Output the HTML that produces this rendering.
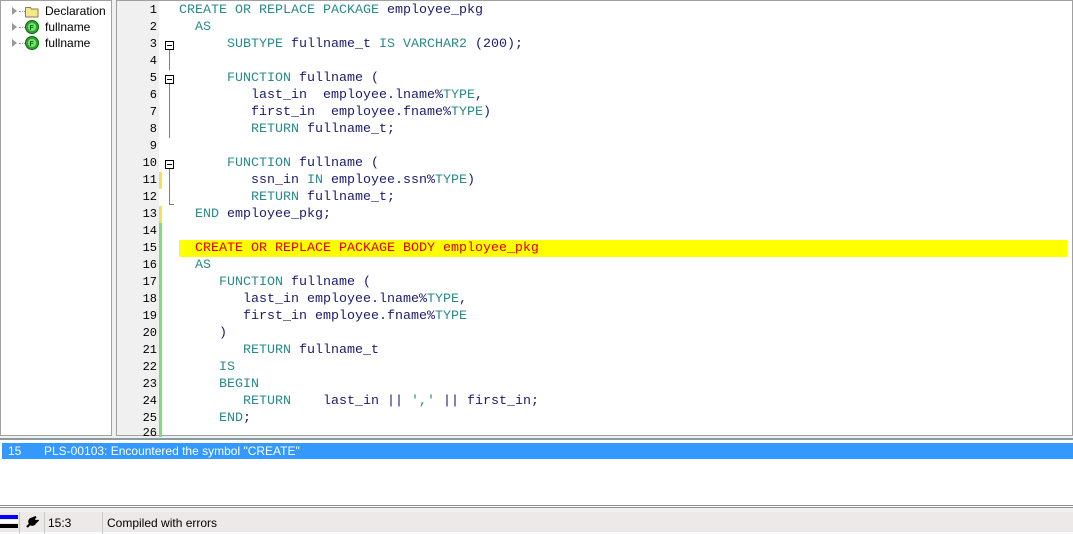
<!DOCTYPE html>
<html><head><meta charset="utf-8"><style>
*{margin:0;padding:0;box-sizing:border-box}
body{width:1073px;height:534px;background:#f0f0f0;position:relative;overflow:hidden;font-family:"Liberation Sans",sans-serif;font-size:12px}
#left{position:absolute;left:0;top:0;width:112px;height:436px;background:#fff;border:1px solid #a0a0a0}
.ti{position:absolute;left:8px;height:16px;line-height:16px;font-size:12px;color:#000}
.ti .exp{position:absolute;left:3px;top:4px;width:0;height:0;border-left:5px solid #999;border-top:4px solid transparent;border-bottom:4px solid transparent}
.ti .dots{position:absolute;left:10px;top:8px;width:6px;border-top:1px dotted #999}
.ti .ic{position:absolute;left:16px;top:1px;width:14px;height:14px}
.ti span{position:absolute;left:36px;white-space:nowrap}
#ed{position:absolute;left:116px;top:0;width:957px;height:436px;background:#fff;border:1px solid #a0a0a0}
#gut{position:absolute;left:0;top:0;width:42px;height:100%;background:#f0f0f0}
.ln{position:absolute;left:0;width:40px;text-align:right;font-family:"Liberation Mono",monospace;font-size:12px;color:#000;height:17px;line-height:17px}
.cb{position:absolute;left:42px;width:3px;height:17px}
.code{position:absolute;left:62px;font-family:"Liberation Mono",monospace;font-size:13.33px;height:17px;line-height:17px;white-space:pre;color:#1a1a70}
.k{color:#2a8a8a}
.hl{background:#ffff00;width:888px;color:#e00000}
.hl .k{color:#e00000}
.fold{position:absolute;left:48px;width:9px;height:9px;border:1px solid #000;background:#fff}
.fold:after{content:"";position:absolute;left:1px;top:3px;width:5px;border-top:1px solid #000}
.vl{position:absolute;left:52px;border-left:1px solid #808080}
#err{position:absolute;left:0;top:438px;width:1073px;height:70px;background:#fff;border-top:2px solid #8a9aa0;border-bottom:3px double #909090}
#errrow{position:absolute;left:2px;top:3px;width:1071px;height:16px;background:#3399ff;color:#fff;font-size:12px;line-height:16px}
#status{position:absolute;left:0;top:512px;width:1073px;height:22px;background:#ece9e8;border-bottom:2px solid #fafafa}
</style></head><body>
<div id="left">
 <div class="ti" style="top:2px"><i class="exp"></i><i class="dots"></i>
  <svg class="ic" viewBox="0 0 14 14"><path d="M0.5 3.5h5l1 1.5h6.5v8h-12.5z" fill="#f3e98a" stroke="#8a8050"/></svg><span style="left:36px">Declaration</span></div>
 <div class="ti" style="top:18px"><i class="exp"></i><i class="dots"></i>
  <svg class="ic" viewBox="0 0 14 14"><circle cx="7" cy="7" r="6.5" fill="#2aa82a" stroke="#0a6a0a"/><circle cx="7" cy="7" r="4" fill="#7ee07e"/><text x="4.5" y="10" font-size="7" font-family="Liberation Sans" fill="#060" font-weight="bold">F</text></svg><span>fullname</span></div>
 <div class="ti" style="top:34px"><i class="exp"></i><i class="dots"></i>
  <svg class="ic" viewBox="0 0 14 14"><circle cx="7" cy="7" r="6.5" fill="#2aa82a" stroke="#0a6a0a"/><circle cx="7" cy="7" r="4" fill="#7ee07e"/><text x="4.5" y="10" font-size="7" font-family="Liberation Sans" fill="#060" font-weight="bold">F</text></svg><span>fullname</span></div>
</div>
<div id="ed">
 <div id="gut"></div>
 <div class="ln" style="top:1px">1</div><div class="ln" style="top:18px">2</div><div class="ln" style="top:35px">3</div><div class="ln" style="top:52px">4</div><div class="ln" style="top:69px">5</div><div class="ln" style="top:86px">6</div><div class="ln" style="top:103px">7</div><div class="ln" style="top:120px">8</div><div class="ln" style="top:137px">9</div><div class="ln" style="top:154px">10</div><div class="ln" style="top:171px">11</div><div class="ln" style="top:188px">12</div><div class="ln" style="top:205px">13</div><div class="ln" style="top:222px">14</div><div class="ln" style="top:239px">15</div><div class="ln" style="top:256px">16</div><div class="ln" style="top:273px">17</div><div class="ln" style="top:290px">18</div><div class="ln" style="top:307px">19</div><div class="ln" style="top:324px">20</div><div class="ln" style="top:341px">21</div><div class="ln" style="top:358px">22</div><div class="ln" style="top:375px">23</div><div class="ln" style="top:392px">24</div><div class="ln" style="top:409px">25</div><div class="ln" style="top:424px">26</div>
 <div class="cb" style="top:171px;background:#f5e050"></div>
 <div class="cb" style="top:205px;background:#f5e050"></div>
 <div class="cb" style="top:222px;height:214px;background:#7ddc7d"></div>
 <div class="vl" style="top:49px;height:20px"></div>
 <div class="vl" style="top:83px;height:54px"></div>
 <div class="vl" style="top:168px;height:36px"></div>
 <div style="position:absolute;left:52px;top:203px;width:5px;border-top:1px solid #808080"></div>
 <div class="fold" style="top:40px"></div>
 <div class="fold" style="top:74px"></div>
 <div class="fold" style="top:159px"></div>
 <div class="code" style="top:1px"><span class="k">CREATE OR REPLACE PACKAGE</span> employee_pkg</div>
 <div class="code" style="top:18px">  <span class="k">AS</span></div>
 <div class="code" style="top:35px">      <span class="k">SUBTYPE</span> fullname_t <span class="k">IS VARCHAR2</span> (200);</div>
 <div class="code" style="top:69px">      <span class="k">FUNCTION</span> fullname (</div>
 <div class="code" style="top:86px">         last_in  employee.lname%<span class="k">TYPE</span>,</div>
 <div class="code" style="top:103px">         first_in  employee.fname%<span class="k">TYPE</span>)</div>
 <div class="code" style="top:120px">         <span class="k">RETURN</span> fullname_t;</div>
 <div class="code" style="top:154px">      <span class="k">FUNCTION</span> fullname (</div>
 <div class="code" style="top:171px">         ssn_in <span class="k">IN</span> employee.ssn%<span class="k">TYPE</span>)</div>
 <div class="code" style="top:188px">         <span class="k">RETURN</span> fullname_t;</div>
 <div class="code" style="top:205px">  <span class="k">END</span> employee_pkg;</div>
 <div class="code hl" style="top:239px">  <span class="k">CREATE OR REPLACE PACKAGE BODY</span> employee_pkg</div>
 <div class="code" style="top:256px">  <span class="k">AS</span></div>
 <div class="code" style="top:273px">     <span class="k">FUNCTION</span> fullname (</div>
 <div class="code" style="top:290px">        last_in employee.lname%<span class="k">TYPE</span>,</div>
 <div class="code" style="top:307px">        first_in employee.fname%<span class="k">TYPE</span></div>
 <div class="code" style="top:324px">     )</div>
 <div class="code" style="top:341px">        <span class="k">RETURN</span> fullname_t</div>
 <div class="code" style="top:358px">     <span class="k">IS</span></div>
 <div class="code" style="top:375px">     <span class="k">BEGIN</span></div>
 <div class="code" style="top:392px">        <span class="k">RETURN</span>    last_in || <span class="k">','</span> || first_in;</div>
 <div class="code" style="top:409px">     <span class="k">END</span>;</div>
</div>
<div id="err"><div id="errrow"><span style="position:absolute;left:6px">15</span><span style="position:absolute;left:42px">PLS-00103: Encountered the symbol "CREATE"</span></div></div>
<div id="status">
 <div style="position:absolute;left:0;top:3px;width:18px;height:4px;background:#0000ff"></div>
 <div style="position:absolute;left:0;top:8px;width:18px;height:3px;background:#fff"></div>
 <div style="position:absolute;left:0;top:12px;width:18px;height:4px;background:#000"></div>
 <div style="position:absolute;left:19px;top:0;height:22px;border-left:1px solid #c8c8c8"></div>
 <svg style="position:absolute;left:25px;top:3px" width="14" height="14" viewBox="0 0 14 14"><path d="M2 12 L7 7 M6 4 a3 3 0 1 0 4 4 L12 6 L10 6 L9 5 L9 3 L11 2 Z" stroke="#000" stroke-width="2.2" fill="#000"/></svg>
 <div style="position:absolute;left:44px;top:0;height:22px;border-left:1px solid #c8c8c8"></div>
 <span style="position:absolute;left:48px;top:4px">15:3</span>
 <div style="position:absolute;left:102px;top:0;height:22px;border-left:1px solid #c8c8c8"></div>
 <span style="position:absolute;left:107px;top:4px">Compiled with errors</span>
</div>
</body></html>
